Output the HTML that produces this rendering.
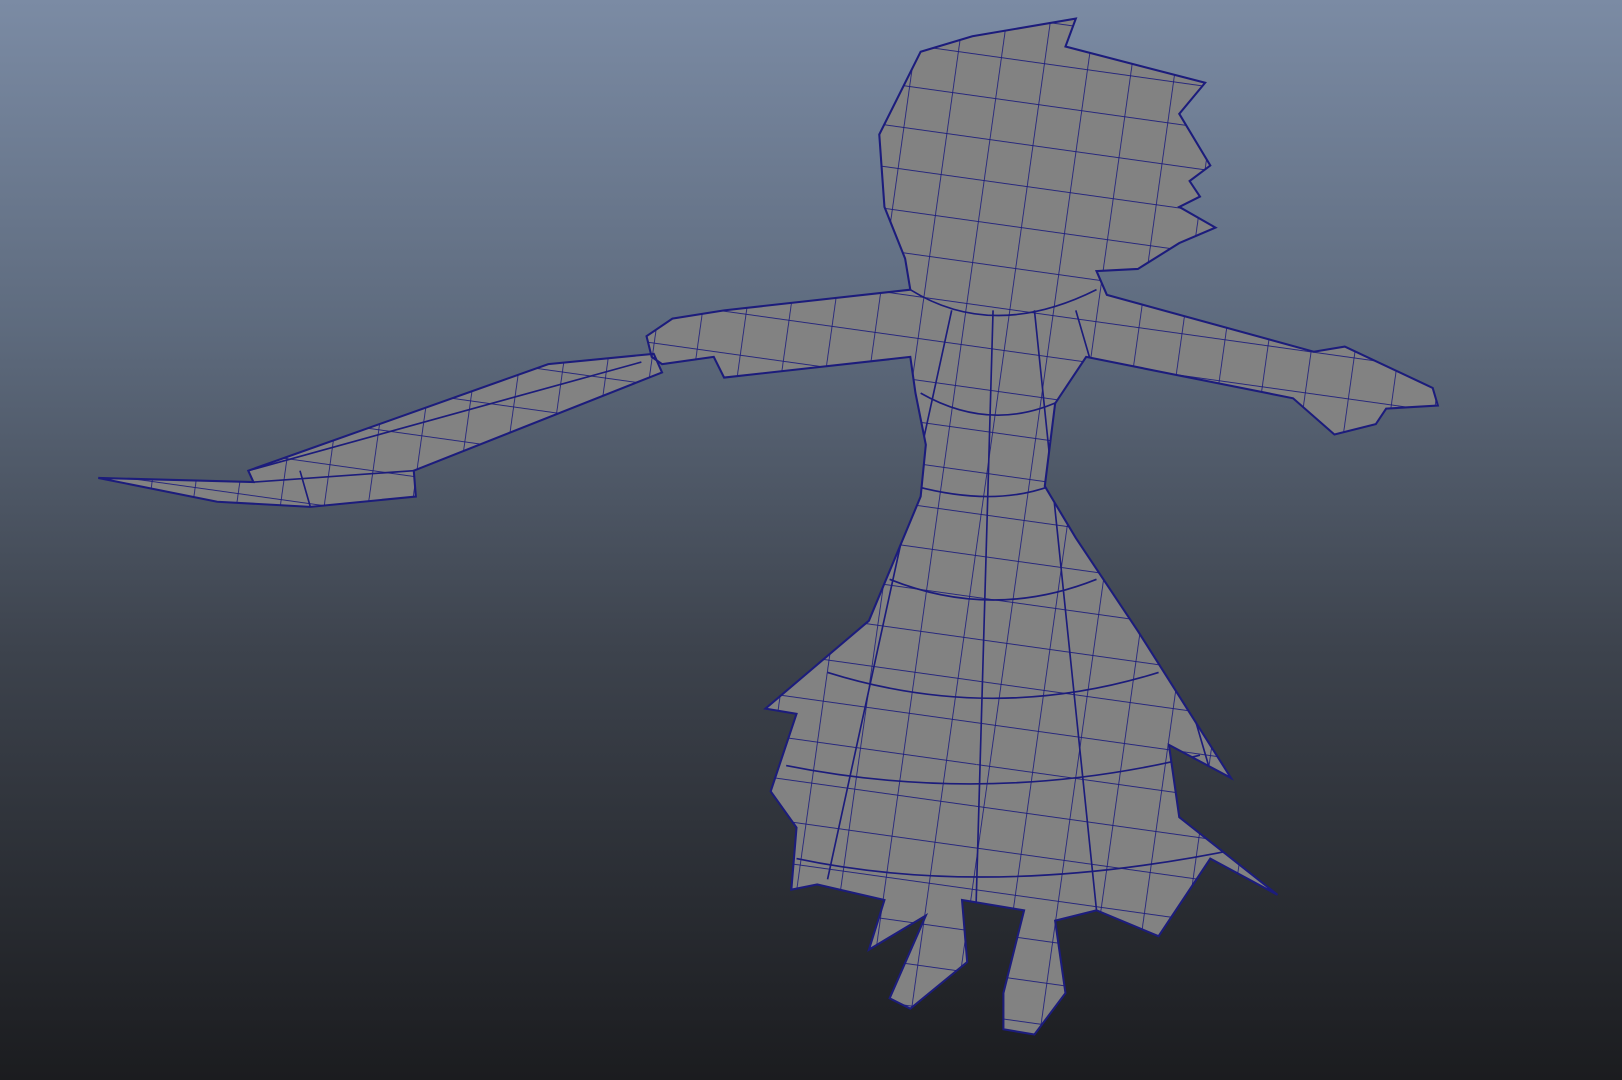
<!DOCTYPE html>
<html><head><meta charset="utf-8"><style>
html,body{margin:0;padding:0;width:1622px;height:1080px;overflow:hidden;background:#1c1d20}
svg{display:block}
</style></head><body>
<svg width="1622" height="1080" viewBox="0 0 1568 1044" preserveAspectRatio="none" xmlns="http://www.w3.org/2000/svg">
<defs>
<linearGradient id="bg" x1="0" y1="0" x2="0" y2="1">
<stop offset="0" stop-color="#7b8ba4"/>
<stop offset="0.3" stop-color="#5e6b7e"/>
<stop offset="0.6" stop-color="#3d434d"/>
<stop offset="1" stop-color="#1b1c1f"/>
</linearGradient>
<pattern id="grid" width="42" height="40" patternUnits="userSpaceOnUse" patternTransform="rotate(8)">
<path d="M0 0H42M0 0V40" stroke="#1c1c7c" stroke-width="1.6" fill="none"/>
</pattern>
<clipPath id="fig">
<path id="shape" d="
M850 130 L890 50 L940 35 L1040 18 L1030 45 L1165 80 L1140 110 L1170 160 L1150 175 L1160 190 L1140 200 L1175 220 L1140 235 L1100 260 L1060 262 L1070 285
L1270 340 L1300 335 L1385 375 L1390 392 L1340 395 L1330 410 L1290 420 L1250 385 L1050 345
L1020 390 L1010 470 L1040 520 L1100 610 L1190 752 L1130 720 L1140 790 L1235 865 L1170 830 L1120 905 L1060 880 L1020 890 L1030 960 L1000 1000 L970 995 L970 960 L990 880 L930 870 L935 930 L880 975 L860 965 L895 885 L840 918 L855 870 L790 855 L765 860 L770 800 L745 765 L755 735 L770 690 L740 685 L840 600 L890 480 L895 430 L885 380 L880 345
L700 365 L690 345 L640 352 L630 345 L625 325 L650 308 L700 300 L880 280 L875 250 L855 200 Z
M240 455 L530 352 L632 342 L640 360 L400 455 L402 480 L300 490 L210 485 L95 462 L245 466 Z"/>
</clipPath>
</defs>
<rect width="1568" height="1044" fill="url(#bg)"/>
<g clip-path="url(#fig)">
<rect width="1568" height="1044" fill="#828282"/>
<rect width="1568" height="1044" fill="url(#grid)"/>
<g stroke="#1c1c7c" stroke-width="1.6" fill="none">
<path d="M880 280 Q960 330 1060 280 M890 380 Q960 420 1030 385 M885 470 Q960 490 1015 470 M860 560 Q960 600 1060 560 M800 650 Q960 700 1120 650 M760 740 Q960 780 1160 730 M770 830 Q960 870 1200 820"/>
<path d="M960 300 L940 1000 M1000 300 L1060 880 M920 300 L800 850 M1040 300 L1180 780"/>
<path d="M245 466 L400 455 M240 455 L620 350 M300 490 L290 455"/>
</g>
</g>
<use href="#shape" fill="none" stroke="#1c1c7c" stroke-width="2"/>
</svg>
</body></html>
